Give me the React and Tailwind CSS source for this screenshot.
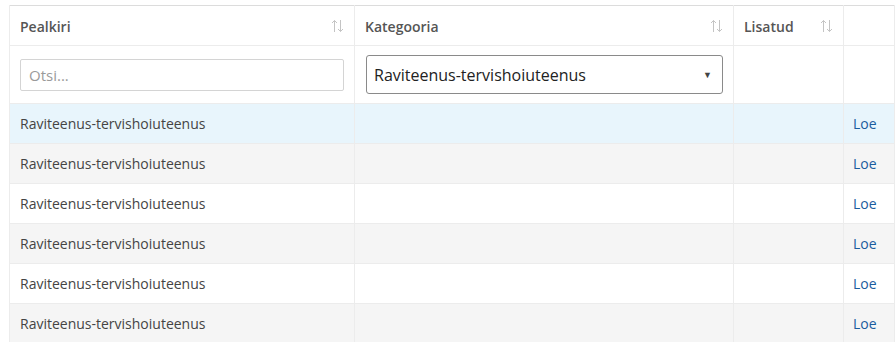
const rows = Array.from({ length: 6 }, (_, i) => ({
  id: i,
  title: 'Raviteenus-tervishoiuteenus',
}))

function SortIcon() {
  return (
    <svg width="13" height="14" viewBox="0 0 13 14" className="shrink-0" fill="none" stroke="#c4c4c4" strokeWidth="1">
      <path d="M3.5 13V1.5M1 4l2.5-2.5L6 4" />
      <path d="M9.5 1v11.5M7 10l2.5 2.5L12 10" />
    </svg>
  )
}

function HeadCell({ label, sort = true, className = '' }) {
  return (
    <th className={`h-[40px] border-r border-[#ececec] px-[10px] text-left font-semibold text-[14px] text-[#555] ${className}`}>
      <div className="flex items-center justify-between pt-[1px]">
        <span>{label}</span>
        {sort && <SortIcon />}
      </div>
    </th>
  )
}

export default function App() {
  return (
    <div className="bg-white pt-[5px] pl-[9px] h-[342px] overflow-hidden" style={{ fontFamily: '"Open Sans", sans-serif' }}>
      <table className="w-[885px] table-fixed border-collapse border-t border-[#dcdcdc]">
        <colgroup>
          <col className="w-[345px]" />
          <col className="w-[379px]" />
          <col className="w-[110px]" />
          <col className="w-[51px]" />
        </colgroup>
        <thead>
          <tr className="border-l border-[#ececec] border-b">
            <HeadCell label="Pealkiri" />
            <HeadCell label="Kategooria" />
            <HeadCell label="Lisatud" />
            <th className="border-r border-[#ececec]" />
          </tr>
          <tr className="border-l border-b border-[#ececec]">
            <td className="h-[58px] border-r border-[#ececec] px-[10px]">
              <input
                placeholder="Otsi..."
                className="w-full h-[32px] rounded-[2px] border border-[#d4d4d4] px-[8px] text-[15px] text-[#333] placeholder-[#9a9a9a] outline-none"
              />
            </td>
            <td className="border-r border-[#ececec] px-[11px]">
              <div className="flex h-[39px] w-[357px] items-center justify-between rounded-[3px] border border-[#8a8a8a] pl-[7px] pr-[10px] text-[16px] text-[#222]">
                <span>Raviteenus-tervishoiuteenus</span>
                <span className="text-[9px] text-[#444]">▼</span>
              </div>
            </td>
            <td className="border-r border-[#ececec]" />
            <td className="border-r border-[#ececec]" />
          </tr>
        </thead>
        <tbody>
          {rows.map((r, i) => (
            <tr
              key={r.id}
              className={`border-l border-b border-[#ececec] text-[14px] ${
                i === 0 ? 'bg-[#e8f5fc]' : i % 2 === 1 ? 'bg-[#f5f5f5]' : 'bg-white'
              }`}
            >
              <td className="h-[40px] border-r border-[#ececec] px-[10px] text-[#444]">{r.title}</td>
              <td className="border-r border-[#ececec]" />
              <td className="border-r border-[#ececec]" />
              <td className="border-r border-[#ececec] px-[9px] text-[#1a5c9e]">Loe</td>
            </tr>
          ))}
        </tbody>
      </table>
    </div>
  )
}
